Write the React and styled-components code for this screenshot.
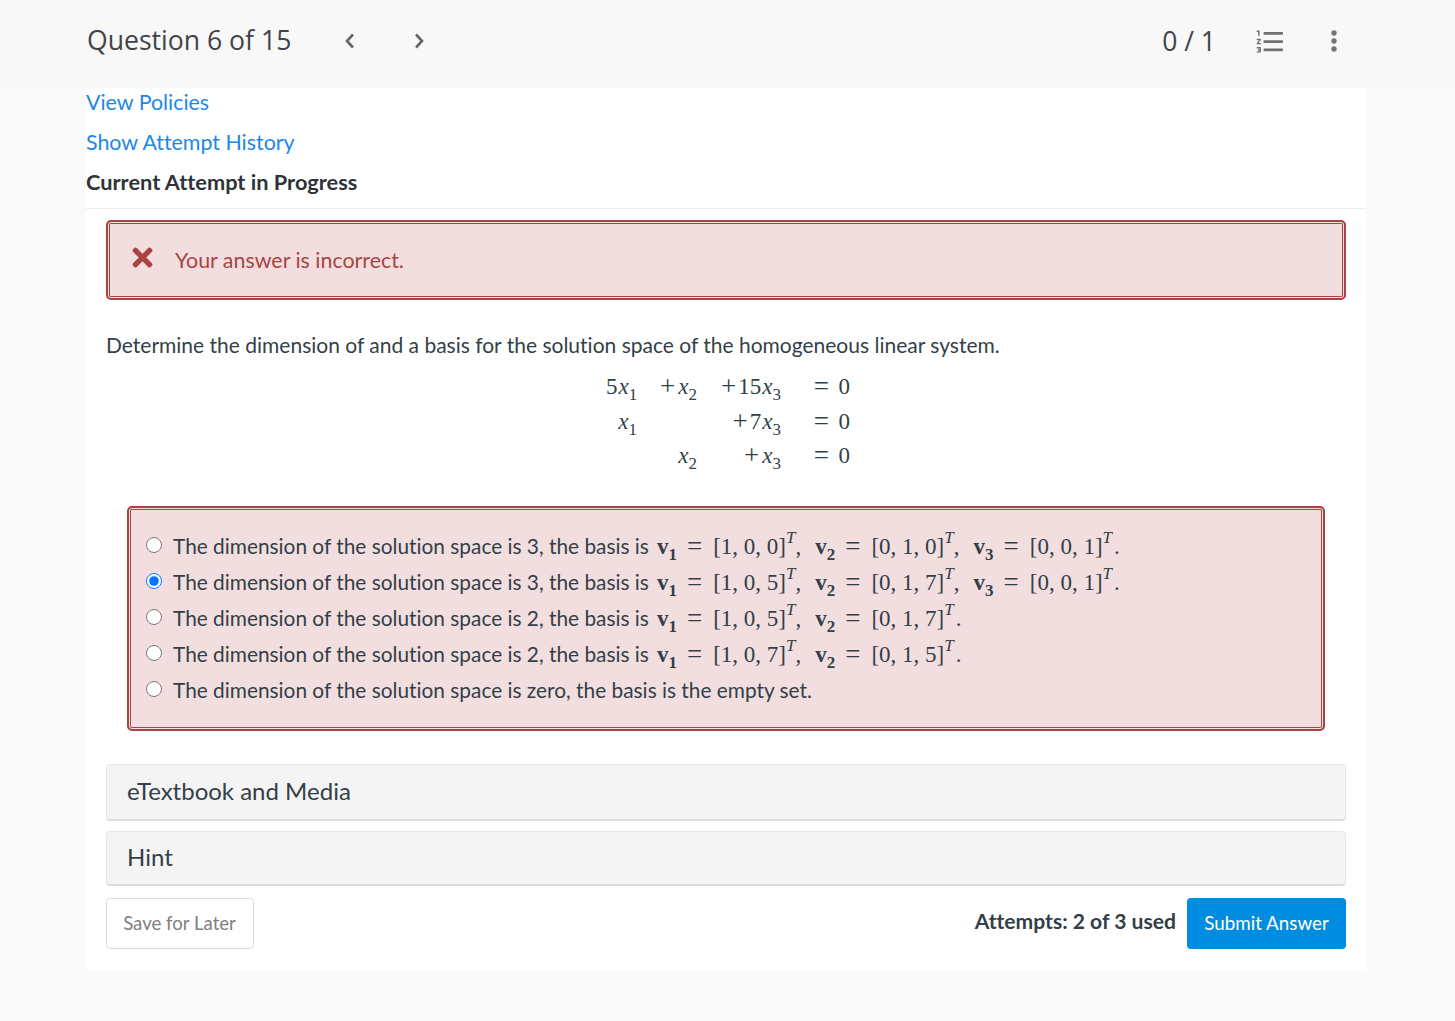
import styled, { createGlobalStyle, css } from "styled-components";
import { FaTimes } from "react-icons/fa";
import { MdFormatListNumbered } from "react-icons/md";

const Global = createGlobalStyle`
  html, body {
    margin: 0;
    padding: 0;
    background: #fafafa;
    font-family: Lato, "Liberation Sans", sans-serif;
    font-variant-ligatures: none;
    color: #333f48;
  }
`;

const errorFrame = css`
  border: 2px solid #a94442;
  border-radius: 5px;
  background: #f2dede;
  box-shadow: inset 0 0 0 1px #f2dede, inset 0 0 0 2px #a94442;
`;

const TopBar = styled.header`
  height: 88px;
  background: #f8f8f8;
  display: flex;
  align-items: center;
  padding: 0 117px 6px 87px;
  box-sizing: border-box;
`;

const Title = styled.h1`
  margin: 0 0 2px;
  font: 400 26.6px "Open Sans", sans-serif;
  color: #3f4549;
  width: 251px;
`;

const NavButton = styled.button`
  width: 24px;
  height: 24px;
  margin-right: ${(p) => p.$gap}px;
  padding: 0;
  border: 0;
  background: none;
  display: flex;
  align-items: center;
  justify-content: center;
`;

const Score = styled.div`
  margin-left: auto;
  font: 400 26.5px "Open Sans", sans-serif;
  color: #3f4549;
`;

const ListIcon = styled(MdFormatListNumbered)`
  font-size: 33px;
  color: #6f6f6f;
  margin: 0 43px 0 38px;
`;

const Card = styled.main`
  width: 1280px;
  height: 883px;
  margin-left: 86px;
  background: #fff;
`;

const Meta = styled.div`
  height: 120px;
  border-bottom: 1px solid #eee;
`;

const MetaLine = styled.div`
  height: 40px;
  line-height: 29px;
  font-size: ${(p) => (p.$bold ? 21.75 : 21.4)}px;
  font-weight: ${(p) => (p.$bold ? 700 : 400)};
  color: ${(p) => (p.$link ? "#1e88e5" : "#2d3336")};
`;

const Body = styled.div`
  padding: 11px 20px 0;
`;

const Alert = styled.div`
  ${errorFrame}
  height: 80px;
  box-sizing: border-box;
  display: flex;
  align-items: center;
  padding: 0 0 0 20px;
  color: #a94442;
  font-size: 21.4px;
`;

const AlertIcon = styled(FaTimes)`
  font-size: 29px;
  margin-right: 18px;
  position: relative;
  top: -3px;
`;

const Question = styled.p`
  margin: 30px 0 0;
  font-size: 21px;
  line-height: 30px;
  color: #333f48;
`;

const System = styled.div`
  display: grid;
  grid-template-columns: 31px 60px 84px 48px 21px;
  grid-auto-rows: 34.5px;
  width: max-content;
  margin: 10px 0 0 500px;
  font: 400 23px "Liberation Serif", serif;
  color: #333f48;
  align-items: center;
`;

const Cell = styled.div`
  text-align: right;
  white-space: nowrap;
`;

const Op = styled.span`
  font-size: 27px;
  line-height: 0;
  vertical-align: -1px;
`;

const PlusSign = styled(Op)`
  margin-right: 2px;
`;

const Var = styled.i`
  margin-left: 1px;
`;

const Sub = styled.sub`
  font-size: 17px;
  line-height: 0;
  font-style: normal;
  vertical-align: -6px;
  font-weight: inherit;
`;

const Sup = styled.sup`
  font-size: 17px;
  line-height: 0;
  font-style: italic;
  vertical-align: 11px;
`;

const Choices = styled.div`
  ${errorFrame}
  margin: 32px 21px 0;
  height: 225px;
  box-sizing: border-box;
  padding: 21px 17px 0;
`;

const Choice = styled.label`
  display: flex;
  align-items: center;
  height: 36px;
  box-sizing: border-box;
  padding-bottom: 2px;
  font-size: 20.85px;
  white-space: nowrap;
  color: #333f48;
`;

const Radio = styled.input`
  width: 16px;
  height: 16px;
  margin: 0 11px 2px 0;
  flex: none;
`;

const Formula = styled.span`
  font: 400 23px "Liberation Serif", serif;
  margin: 2px 0 0 8px;
`;

const Vec = styled.b`
  font-weight: 700;
`;

const Eq = styled(Op)`
  margin: 0 11px 0 10px;
`;

const Sep = styled.span`
  margin-right: 14px;
`;

const Dot = styled.span`
  margin-left: 2px;
`;

const Accordion = styled.div`
  height: ${(p) => p.$h}px;
  margin-top: ${(p) => p.$top}px;
  box-sizing: border-box;
  display: flex;
  align-items: center;
  padding: 0 0 2px 20px;
  background: #f4f4f4;
  border: 1px solid #e6e6e6;
  border-bottom: 2px solid #ddd;
  border-radius: 4px;
  font-size: 24px;
  color: #333f48;
`;

const Actions = styled.div`
  display: flex;
  align-items: center;
  margin-top: 12px;
`;

const SaveButton = styled.button`
  width: 148px;
  height: 51px;
  padding: 0 1px 1px 0;
  background: #fff;
  border: 1px solid #dcdcdc;
  border-radius: 4px;
  font: 400 18.6px Lato, sans-serif;
  color: #808080;
`;

const Attempts = styled.div`
  margin-left: auto;
  margin-right: 11px;
  font-size: 21.1px;
  font-weight: 700;
  position: relative;
  top: -3px;
`;

const SubmitButton = styled.button`
  width: 159px;
  height: 51px;
  padding: 0 0 1px;
  background: #008de1;
  border: 0;
  border-radius: 4px;
  font: 400 18.8px Lato, sans-serif;
  color: #fff;
`;

const Chevron = ({ d }) => (
  <svg width="14" height="20" viewBox="0 0 14 20" fill="none">
    <path d={d} stroke="#666" strokeWidth="2.6" />
  </svg>
);

const Dots = () => (
  <svg width="8" height="24" viewBox="0 0 8 24" fill="#757575">
    <circle cx="4" cy="4" r="2.7" />
    <circle cx="4" cy="12" r="2.7" />
    <circle cx="4" cy="20" r="2.7" />
  </svg>
);

const X = ({ n }) => (
  <Var>
    x<Sub>{n}</Sub>
  </Var>
);

const Plus = () => <PlusSign>+</PlusSign>;

const V = ({ n, value }) => (
  <>
    <Vec>
      v<Sub>{n}</Sub>
    </Vec>
    <Eq>=</Eq>[{value}]<Sup>T</Sup>
  </>
);

const options = [
  { text: "The dimension of the solution space is 3, the basis is", vecs: ["1, 0, 0", "0, 1, 0", "0, 0, 1"] },
  { text: "The dimension of the solution space is 3, the basis is", vecs: ["1, 0, 5", "0, 1, 7", "0, 0, 1"], checked: true },
  { text: "The dimension of the solution space is 2, the basis is", vecs: ["1, 0, 5", "0, 1, 7"] },
  { text: "The dimension of the solution space is 2, the basis is", vecs: ["1, 0, 7", "0, 1, 5"] },
  { text: "The dimension of the solution space is zero, the basis is the empty set.", vecs: [] },
];

export default function App() {
  return (
    <>
      <Global />
      <TopBar>
        <Title>Question 6 of 15</Title>
        <NavButton $gap={45}>
          <Chevron d="M10 3.5 4 10l6 6.5" />
        </NavButton>
        <NavButton $gap={0}>
          <Chevron d="M4 3.5l6 6.5-6 6.5" />
        </NavButton>
        <Score>0 / 1</Score>
        <ListIcon />
        <Dots />
      </TopBar>
      <Card>
        <Meta>
          <MetaLine $link>View Policies</MetaLine>
          <MetaLine $link>Show Attempt History</MetaLine>
          <MetaLine $bold>Current Attempt in Progress</MetaLine>
        </Meta>
        <Body>
          <Alert>
            <AlertIcon />
            Your answer is incorrect.
          </Alert>
          <Question>
            Determine the dimension of and a basis for the solution space of the homogeneous linear system.
          </Question>
          <System>
            <Cell>5<X n="1" /></Cell>
            <Cell><Plus /><X n="2" /></Cell>
            <Cell><Plus />15<X n="3" /></Cell>
            <Cell><Op>=</Op></Cell>
            <Cell>0</Cell>
            <Cell><X n="1" /></Cell>
            <Cell />
            <Cell><Plus />7<X n="3" /></Cell>
            <Cell><Op>=</Op></Cell>
            <Cell>0</Cell>
            <Cell />
            <Cell><X n="2" /></Cell>
            <Cell><Plus /><X n="3" /></Cell>
            <Cell><Op>=</Op></Cell>
            <Cell>0</Cell>
          </System>
          <Choices>
            {options.map((o, i) => (
              <Choice key={i}>
                <Radio type="radio" name="answer" defaultChecked={o.checked} />
                {o.text}
                {o.vecs.length > 0 && (
                  <Formula>
                    {o.vecs.map((v, j) => (
                      <span key={j}>
                        <V n={j + 1} value={v} />
                        {j < o.vecs.length - 1 ? <Sep>,</Sep> : <Dot>.</Dot>}
                      </span>
                    ))}
                  </Formula>
                )}
              </Choice>
            ))}
          </Choices>
          <Accordion $h={57} $top={33}>eTextbook and Media</Accordion>
          <Accordion $h={55} $top={10}>Hint</Accordion>
          <Actions>
            <SaveButton>Save for Later</SaveButton>
            <Attempts>Attempts: 2 of 3 used</Attempts>
            <SubmitButton>Submit Answer</SubmitButton>
          </Actions>
        </Body>
      </Card>
    </>
  );
}
